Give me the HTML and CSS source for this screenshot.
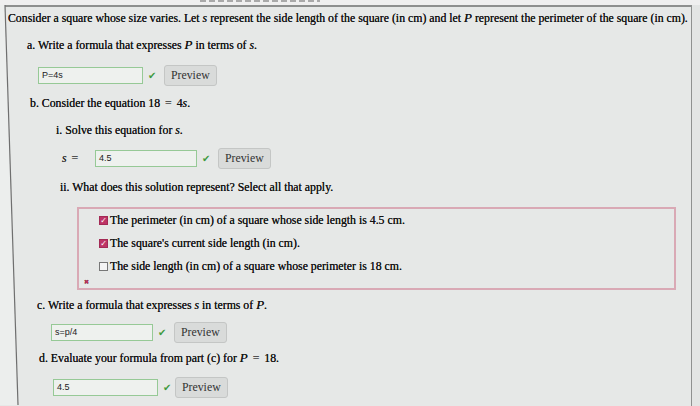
FILE: index.html
```html
<!DOCTYPE html>
<html lang="en">
  <head>
    <meta charset="UTF-8" />
    <title>Square perimeter</title>
    <link rel="stylesheet" href="styles.css">
  </head>
  <body>
    <div class="top-strip"><span class="smudge"></span></div>
    <div class="panel">
      <svg class="left-edge" width="24" height="400" viewBox="0 0 24 400">
        <polygon points="0,0 5,0 18,400 0,400" fill="#eceeed" />
        <line x1="5" y1="0" x2="18" y2="400" stroke="#6f6f6f" stroke-width="1.2" />
      </svg>

      <p class="prompt">
        Consider a square whose size varies. Let <i>s</i> represent the side length of the square (in cm) and let <i class="var">P</i> represent the perimeter of the square (in cm).
      </p>

      <p class="part part-a">a. Write a formula that expresses <i class="var">P</i> in terms of <i>s</i>.</p>
      <div class="answer answer-a">
        <span class="field">P=4s</span>
        <span class="tick">&#10004;</span>
        <button class="preview">Preview</button>
      </div>

      <p class="part part-b">b. Consider the equation 18 <span class="eq">=</span> 4<i>s</i>.</p>
      <p class="part part-bi">i. Solve this equation for <i>s</i>.</p>
      <div class="answer answer-bi">
        <span class="label"><i>s</i> <span class="eq">=</span></span>
        <span class="field field-short">4.5</span>
        <span class="tick">&#10004;</span>
        <button class="preview">Preview</button>
      </div>

      <p class="part part-bii">ii. What does this solution represent? Select all that apply.</p>
      <div class="choices">
        <label class="choice"><span class="box checked">&#10003;</span>The perimeter (in cm) of a square whose side length is 4.5 cm.</label>
        <label class="choice"><span class="box checked">&#10003;</span>The square's current side length (in cm).</label>
        <label class="choice"><span class="box"></span>The side length (in cm) of a square whose perimeter is 18 cm.</label>
        <span class="wrong">&#10006;</span>
      </div>

      <p class="part part-c">c. Write a formula that expresses <i>s</i> in terms of <i class="var">P</i>.</p>
      <div class="answer answer-c">
        <span class="field field-short">s=p/4</span>
        <span class="tick">&#10004;</span>
        <button class="preview">Preview</button>
      </div>

      <p class="part part-d">d. Evaluate your formula from part (c) for <i class="var">P</i> <span class="eq">=</span> 18.</p>
      <div class="answer answer-d">
        <span class="field">4.5</span>
        <span class="tick tick-close">&#10004;</span>
        <button class="preview">Preview</button>
      </div>
    </div>
  </body>
</html>
```

FILE: styles.css
```css
body {
  margin: 0;
  height: 406px;
  overflow: hidden;
  background-color: #e3e5e4;
  font-family: "Liberation Serif", "Times New Roman", serif;
  font-size: 11.8px;
  color: #141414;
  text-shadow: 0 0 0.4px #222;
}

.top-strip {
  height: 5px;
  background-color: #efefef;
  position: relative;
}

.smudge {
  position: absolute;
  left: 200px;
  top: 0;
  width: 120px;
  height: 2px;
  background: repeating-linear-gradient(90deg, #7a7a7a 0 6px, transparent 6px 9px);
  opacity: 0.6;
}

.panel {
  position: relative;
  border-top: 2px solid #8d8f8e;
  border-right: 1px solid #8f9190;
  margin-right: 8px;
  height: 399px;
  background-color: #e6e8e7;
}

.left-edge {
  position: absolute;
  left: 0;
  top: -2px;
}

p {
  margin: 0;
  line-height: 14px;
}

.prompt {
  position: relative;
  margin-top: 4px;
  padding-left: 8px;
  white-space: nowrap;
}

i.var {
  font-size: 13px;
}

.eq {
  color: #555;
  padding: 0 2px;
}

.part-a {
  margin-top: 13px;
  padding-left: 27px;
}

.part-b {
  margin-top: 10px;
  padding-left: 30px;
}

.part-bi {
  margin-top: 13px;
  padding-left: 56px;
}

.part-bii {
  margin-top: 12px;
  padding-left: 60px;
}

.part-c {
  margin-top: 8px;
  padding-left: 37px;
}

.part-d {
  margin-top: 8px;
  padding-left: 39px;
}

.answer {
  display: flex;
  align-items: center;
  height: 21px;
}

.answer-a {
  margin-top: 13px;
  padding-left: 38px;
}

.answer-bi {
  margin-top: 11px;
  padding-left: 62px;
  height: 20px;
}

.answer-c {
  margin-top: 10px;
  padding-left: 51px;
}

.answer-d {
  margin-top: 12px;
  padding-left: 53px;
}

.label {
  width: 33px;
  color: #333;
}

.field {
  box-sizing: border-box;
  width: 105px;
  height: 17px;
  border: 1px solid #96c996;
  background-color: #eef1ee;
  font-family: "Liberation Sans", Arial, sans-serif;
  font-size: 9px;
  line-height: 15px;
  padding-left: 3px;
  color: #222;
  text-shadow: none;
}

.field-short {
  width: 102px;
}

.tick {
  color: #3f9a3f;
  font-size: 10px;
  margin-left: 5px;
  width: 16px;
  font-family: "DejaVu Sans", sans-serif;
  text-shadow: none;
}

.tick-close {
  width: 12px;
}

.preview {
  height: 21px;
  padding: 0 6px;
  border: 1px solid #c4c6c5;
  border-radius: 3px;
  background-color: #d9dbda;
  font-family: "Liberation Serif", "Times New Roman", serif;
  font-size: 11.8px;
  color: #333;
}

.choices {
  position: relative;
  margin: 13px 15px 0 77px;
  height: 83px;
  box-sizing: border-box;
  border: 2px solid #d9a9b5;
  padding: 0 0 0 20px;
}

.choice {
  display: flex;
  align-items: center;
  height: 23px;
}

.box {
  box-sizing: border-box;
  width: 9px;
  height: 9px;
  margin-right: 2px;
  border: 1px solid #777;
  background-color: #f4f4f4;
  font-size: 8px;
  line-height: 8px;
  text-align: center;
  color: #fff;
  font-family: "DejaVu Sans", sans-serif;
  text-shadow: none;
}

.box.checked {
  background-color: #bd3466;
  border-color: #a32a55;
}

.wrong {
  position: absolute;
  left: 5px;
  bottom: 3px;
  font-size: 6px;
  color: #c0305a;
  font-family: "DejaVu Sans", sans-serif;
}
```
